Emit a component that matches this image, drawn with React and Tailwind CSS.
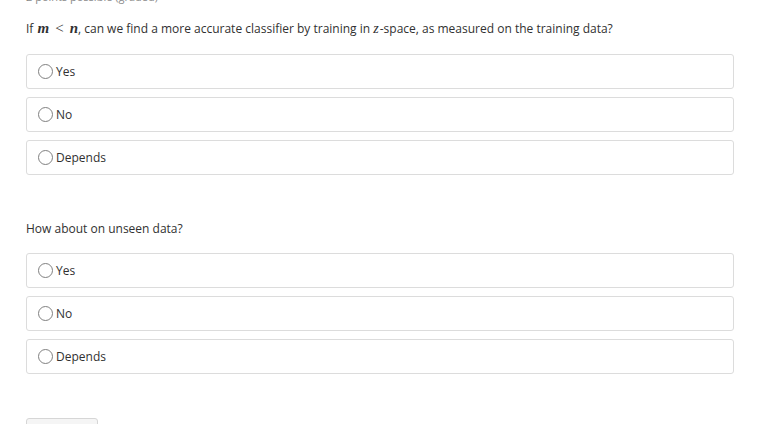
import React from "react";

const font = { fontFamily: '"Open Sans", "DejaVu Sans", sans-serif' };
const serif = { fontFamily: '"Liberation Serif", "DejaVu Serif", serif' };

function Option({ label }) {
  return (
    <label className="flex items-center h-[35px] border border-[#dcdcdc] rounded-[3px] pl-[11px] bg-white">
      <span className="w-[15px] h-[15px] rounded-full border border-[#808080] bg-white mr-[3px] shrink-0" />
      <span className="text-[12px] text-[#313131] leading-none">{label}</span>
    </label>
  );
}

function Group() {
  return (
    <div className="flex flex-col gap-[8px]">
      <Option label="Yes" />
      <Option label="No" />
      <Option label="Depends" />
    </div>
  );
}

export default function App() {
  return (
    <div className="w-[761px] h-[424px] overflow-hidden bg-white" style={font}>
      <div className="pl-[26px] w-[734px]">
        <div className="mt-[-11px] h-[16px] text-[11px] leading-[16px] text-[#8a8a8a]">
          2 points possible (graded)
        </div>
        <p className="mt-[15px] h-[17px] text-[12px] leading-[17px] text-[#313131] whitespace-nowrap">
          If{" "}
          <span style={serif} className="italic font-bold text-[15px] ml-[1px]">m</span>
          <span style={serif} className="text-[15px] mx-[6px]">&lt;</span>
          <span style={serif} className="italic font-bold text-[15px]">n</span>
          , can we find a more accurate classifier by training in{" "}
          <span style={serif} className="italic text-[14px] mr-[1px]">z</span>
          -space, as measured on the training data?
        </p>
        <div className="mt-[17px]">
          <Group />
        </div>
        <p className="mt-[45px] h-[17px] text-[12px] leading-[17px] text-[#313131]">
          How about on unseen data?
        </p>
        <div className="mt-[16px]">
          <Group />
        </div>
        <div className="mt-[44px] w-[72px] h-[20px] border border-[#d6d6d6] rounded-[3px] bg-[#f5f5f5]" />
      </div>
    </div>
  );
}
